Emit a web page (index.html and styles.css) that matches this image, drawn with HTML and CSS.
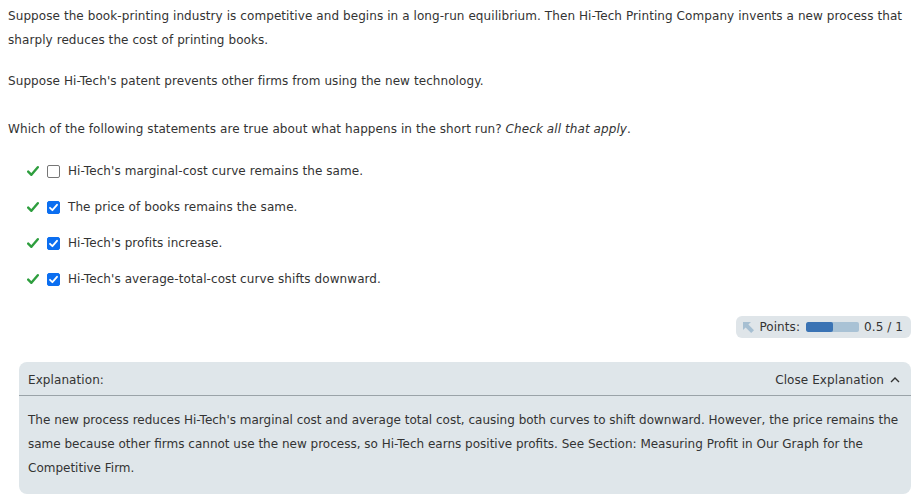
FILE: index.html
```html
<!DOCTYPE html>
<html>
<head>
<meta charset="utf-8">
<link rel="stylesheet" href="styles.css">
</head>
<body>
<div class="page">
  <p class="p1">Suppose the book-printing industry is competitive and begins in a long-run equilibrium. Then Hi-Tech Printing Company invents a new process that sharply reduces the cost of printing books.</p>
  <p class="p2">Suppose Hi-Tech's patent prevents other firms from using the new technology.</p>
  <p class="p3">Which of the following statements are true about what happens in the short run? <em>Check all that apply</em>.</p>
  <ul class="options">
    <li class="opt"><svg class="tick" viewBox="0 0 12 12"><path d="M1.2 6.6 L4.4 9.8 L10.8 2.2" fill="none" stroke="#2e9e3e" stroke-width="2.4" stroke-linecap="round" stroke-linejoin="round"/></svg><span class="box"></span><span class="lbl">Hi-Tech's marginal-cost curve remains the same.</span></li>
    <li class="opt"><svg class="tick" viewBox="0 0 12 12"><path d="M1.2 6.6 L4.4 9.8 L10.8 2.2" fill="none" stroke="#2e9e3e" stroke-width="2.4" stroke-linecap="round" stroke-linejoin="round"/></svg><span class="box on"><svg viewBox="0 0 13 13"><path d="M3 6.8 L5.4 9.2 L10 3.8" fill="none" stroke="#fff" stroke-width="1.8" stroke-linecap="round" stroke-linejoin="round"/></svg></span><span class="lbl">The price of books remains the same.</span></li>
    <li class="opt"><svg class="tick" viewBox="0 0 12 12"><path d="M1.2 6.6 L4.4 9.8 L10.8 2.2" fill="none" stroke="#2e9e3e" stroke-width="2.4" stroke-linecap="round" stroke-linejoin="round"/></svg><span class="box on"><svg viewBox="0 0 13 13"><path d="M3 6.8 L5.4 9.2 L10 3.8" fill="none" stroke="#fff" stroke-width="1.8" stroke-linecap="round" stroke-linejoin="round"/></svg></span><span class="lbl">Hi-Tech's profits increase.</span></li>
    <li class="opt"><svg class="tick" viewBox="0 0 12 12"><path d="M1.2 6.6 L4.4 9.8 L10.8 2.2" fill="none" stroke="#2e9e3e" stroke-width="2.4" stroke-linecap="round" stroke-linejoin="round"/></svg><span class="box on"><svg viewBox="0 0 13 13"><path d="M3 6.8 L5.4 9.2 L10 3.8" fill="none" stroke="#fff" stroke-width="1.8" stroke-linecap="round" stroke-linejoin="round"/></svg></span><span class="lbl">Hi-Tech's average-total-cost curve shifts downward.</span></li>
  </ul>
  <div class="points-row">
    <div class="points">
      <svg class="arrow" viewBox="0 0 11 11"><path d="M0 0 H8 L5.4 2.6 L11 8.2 L8.2 11 L2.6 5.4 L0 8 Z" fill="#a6bfd2"/></svg>
      <span class="plabel">Points:</span>
      <span class="bar"><span class="fill" style="width:50%"></span></span>
      <span class="score">0.5 / 1</span>
    </div>
  </div>
  <div class="expl">
    <div class="expl-head">
      <span>Explanation:</span>
      <span class="close">Close Explanation <svg class="chev" viewBox="0 0 10 6"><path d="M1 5 L5 1 L9 5" fill="none" stroke="#333" stroke-width="1.4"/></svg></span>
    </div>
    <div class="expl-body">The new process reduces Hi-Tech's marginal cost and average total cost, causing both curves to shift downward. However, the price remains the same because other firms cannot use the new process, so Hi-Tech earns positive profits. See Section: Measuring Profit in Our Graph for the Competitive Firm.</div>
  </div>
</div>
</body>
</html>
```
FILE: styles.css
```css
html, body {
  margin: 0;
  padding: 0;
  background: #fff;
}
.page {
  font-family: "DejaVu Sans", Verdana, sans-serif;
  font-size: 12px;
  letter-spacing: 0.08px;
  line-height: 24px;
  color: #333;
  padding: 4px 9px 0 8px;
}
p {
  margin: 0;
}
.p2 {
  margin-top: 17px;
}
.p3 {
  margin-top: 24px;
}
.options {
  list-style: none;
  margin: 18px 0 0 0;
  padding: 0;
}
.opt {
  display: flex;
  align-items: center;
  height: 24px;
  margin-bottom: 12px;
  padding-left: 19px;
}
.tick {
  width: 12px;
  height: 12px;
  margin-right: 8px;
}
.box {
  width: 13px;
  height: 13px;
  box-sizing: border-box;
  border: 1px solid #767676;
  border-radius: 2px;
  background: #fff;
  margin-right: 8px;
  display: flex;
}
.box.on {
  background: #0b6ef0;
  border-color: #0b6ef0;
}
.box svg {
  width: 13px;
  height: 13px;
  margin: -1px;
}
.points-row {
  display: flex;
  justify-content: flex-end;
  margin-top: 25px;
}
.points {
  display: flex;
  align-items: center;
  height: 22px;
  background: #dfe5e9;
  border-radius: 6px;
  padding: 0 8px 0 7px;
  line-height: 22px;
}
.arrow {
  width: 11px;
  height: 11px;
  margin-right: 5px;
}
.plabel {
  margin-right: 6px;
}
.bar {
  width: 53px;
  height: 10px;
  background: #a9c2d5;
  border-radius: 2px;
  overflow: hidden;
  display: flex;
  margin-right: 5px;
}
.fill {
  background: #3a73b4;
  height: 100%;
  border-radius: 2px;
}
.expl {
  margin: 24px 0 0 11px;
  background: #dfe6ea;
  border-radius: 8px;
}
.expl-head {
  display: flex;
  justify-content: space-between;
  align-items: center;
  box-sizing: border-box;
  height: 34px;
  padding: 3px 11px 0 9px;
  border-bottom: 1px solid #9aa3a8;
}
.close {
  display: flex;
  align-items: center;
}
.chev {
  width: 10px;
  height: 6px;
  margin-left: 6px;
}
.expl-body {
  letter-spacing: 0;
  padding: 12px 4px 14px 9px;
}
```
